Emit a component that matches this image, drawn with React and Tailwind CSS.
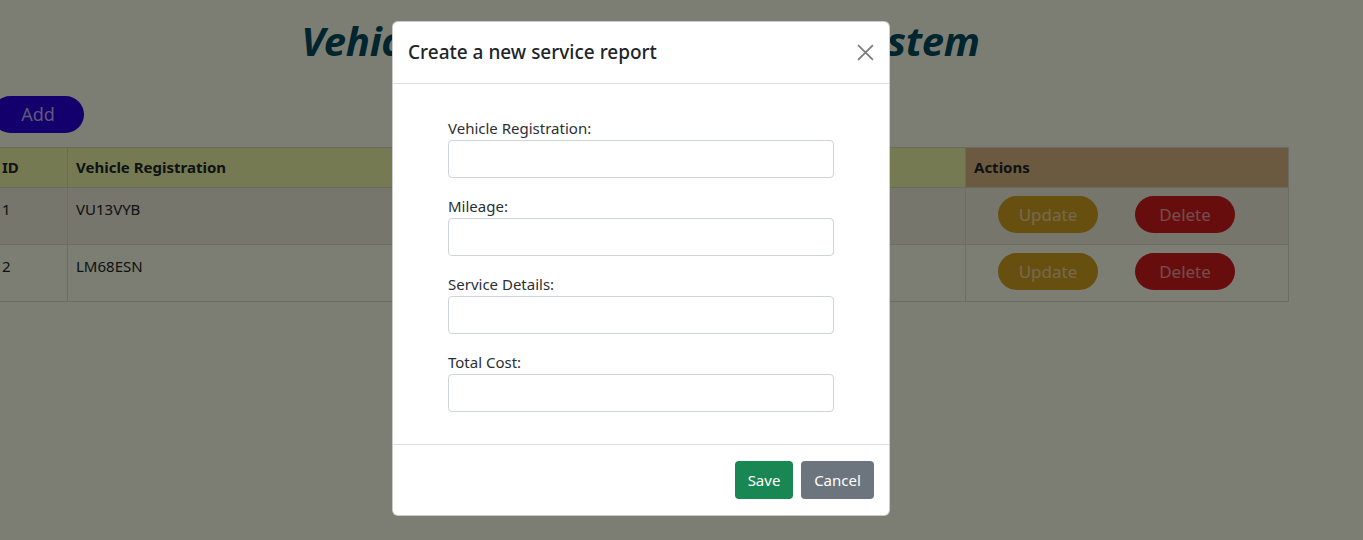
import React from 'react';

const rows = [
  { id: 1, reg: 'VU13VYB' },
  { id: 2, reg: 'LM68ESN' },
];

const fields = ['Vehicle Registration:', 'Mileage:', 'Service Details:', 'Total Cost:'];

const font = { fontFamily: '"Noto Sans", "Open Sans", sans-serif' };

export default function App() {
  return (
    <div className="relative w-[1363px] h-[540px] overflow-hidden bg-[#f8fce6] text-[#212529]" style={font}>
      {/* Page underneath */}
      <div className="ml-[-8px] w-[1297px] pt-[15px]">
        <h1 className="text-center text-[40px] font-bold italic leading-[52px] text-[#004a5e] tracking-[-0.3px]">
          Vehicle Service Management System
        </h1>
        <div className="mt-[29px]">
          <button className="h-[37px] w-[92px] rounded-full bg-[#2600d8] text-[18px] text-white/70">
            Add
          </button>
        </div>
        <table className="mt-[14px] w-full border-collapse text-[15px]">
          <thead>
            <tr className="h-[40px] text-left font-bold">
              <th className="w-[75px] border border-[#d0d4c8] bg-[#eaf4a4] px-[9px]">ID</th>
              <th className="w-[360px] border border-[#d0d4c8] bg-[#eaf4a4] px-[8px]">Vehicle Registration</th>
              <th className="w-[170px] border border-[#d0d4c8] bg-[#eaf4a4] px-[9px]">Mileage</th>
              <th className="w-[190px] border border-[#d0d4c8] bg-[#eaf4a4] px-[9px]">Service Details</th>
              <th className="w-[178px] border border-[#d0d4c8] bg-[#eaf4a4] px-[9px]">Total Cost</th>
              <th className="border border-[#d0d4c8] bg-[#d8b480] px-[8px]">Actions</th>
            </tr>
          </thead>
          <tbody>
            {rows.map((r, i) => (
              <tr key={r.id} className={i === 0 ? 'h-[57px] bg-[#ececd8]' : 'h-[57px]'}>
                <td className="border border-[#d8dccc] px-[9px] pt-[10px] align-top">{r.id}</td>
                <td className="border border-[#d8dccc] px-[8px] pt-[10px] align-top">{r.reg}</td>
                <td className="border border-[#d8dccc]"></td>
                <td className="border border-[#d8dccc]"></td>
                <td className="border border-[#d8dccc]"></td>
                <td className="border border-[#d8dccc] pl-[32px] pt-[8px] align-top">
                  <div className="flex gap-[37px]">
                    <button className="h-[37px] w-[100px] rounded-full bg-[#cf9e1e] text-[17px] text-white/55">Update</button>
                    <button className="h-[37px] w-[100px] rounded-full bg-[#cf1a1a] text-[17px] text-white/55">Delete</button>
                  </div>
                </td>
              </tr>
            ))}
          </tbody>
        </table>
      </div>

      {/* Backdrop */}
      <div className="absolute inset-0 bg-black/50"></div>

      {/* Modal */}
      <div className="absolute left-[392px] top-[21px] w-[498px] rounded-[6px] border border-black/20 bg-white">
        <div className="flex h-[62px] items-center justify-between border-b border-[#dee2e6] px-[15px]">
          <h5 className="text-[19px] font-medium text-[#212529]">Create a new service report</h5>
          <button className="text-[#7a7a7a]">
            <svg width="17" height="17" viewBox="0 0 16 16" fill="none" stroke="currentColor" strokeWidth="1.6">
              <path d="M1 1L15 15M15 1L1 15" />
            </svg>
          </button>
        </div>
        <div className="px-[55px] py-[32px]">
          {fields.map((f, i) => (
            <div key={f} className={i === fields.length - 1 ? '' : 'mb-[16px]'}>
              <label className="block h-[24px] text-[15px] leading-[24px] text-[#2b2f33]">{f}</label>
              <input className="block h-[38px] w-[386px] rounded-[4px] border border-[#ced4da] bg-white" />
            </div>
          ))}
        </div>
        <div className="flex h-[71px] items-center justify-end gap-[8px] border-t border-[#dee2e6] px-[15px]">
          <button className="h-[38px] w-[58px] rounded-[4px] bg-[#198754] text-[15px] text-white">Save</button>
          <button className="h-[38px] w-[73px] rounded-[4px] bg-[#6c757d] text-[15px] text-white">Cancel</button>
        </div>
      </div>
    </div>
  );
}
